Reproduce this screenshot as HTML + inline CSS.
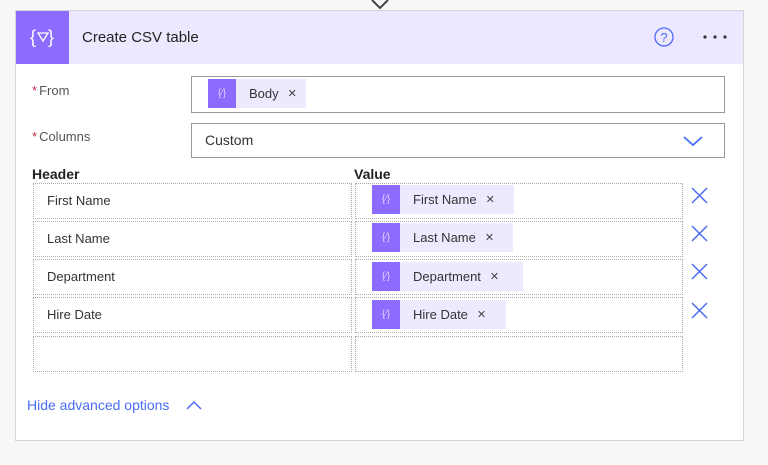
<!DOCTYPE html>
<html><head><meta charset="utf-8"><style>
*{box-sizing:border-box;margin:0;padding:0}
svg{display:block}
body{width:768px;height:465px;background:#f8f8f8;font-family:"Segoe UI","Liberation Sans",sans-serif;position:relative;overflow:hidden;color:#333}
.a{position:absolute}
.card{left:15px;top:10px;width:729px;height:431px;background:#fff;border:1px solid #d6d6d6}
.hdr{left:16px;top:11px;width:727px;height:53px;background:#ede8ff}
.ico{left:16px;top:11px;width:53px;height:53px;background:#8c6cff}
.title{left:82px;top:29px;font-size:15px;color:#222}
.lbl{font-size:13px;color:#555}
.lbl b{color:#c4314b;font-weight:normal;margin-right:2px}
.box{border:1px solid #9a9a9a;background:#fff}
.cell{border:1px dotted #aaa;font-size:13px;color:#333;padding-left:13px;line-height:34px}
.tok{height:29px;background:#efe9ff;font-size:13px;color:#333;display:flex;align-items:center}
.tok i{width:28px;height:29px;background:#8c6cff;display:flex;align-items:center;justify-content:center;margin-right:13px;font-style:normal;color:#d8ccff;font-size:10px}
.tok span.x{margin-left:9px;font-size:11px;color:#444}
</style></head><body>
<svg class="a" style="left:369px;top:0" width="22" height="10"><path d="M3 0 L11 8 L19 0" fill="none" stroke="#444" stroke-width="2"/></svg>
<div class="a card"></div>
<div class="a hdr"></div>
<div class="a ico"></div>
<svg class="a" style="left:28px;top:24px" width="30" height="28"><text x="2" y="19" font-size="18" fill="#fff" font-family="Liberation Sans">{</text><text x="20" y="19" font-size="18" fill="#fff" font-family="Liberation Sans">}</text><path d="M10 9 H20 L15 17 Z" fill="none" stroke="#fff" stroke-width="1.3"/></svg>
<div class="a title">Create CSV table</div>
<svg class="a" style="left:654px;top:27px" width="20" height="20"><circle cx="10" cy="10" r="9" fill="none" stroke="#4a6cf7" stroke-width="1.3"/><text x="10" y="15" text-anchor="middle" font-size="13" fill="#4a6cf7" font-family="Liberation Sans">?</text></svg>
<svg class="a" style="left:703px;top:35px" width="26" height="4"><circle cx="2" cy="2" r="1.6" fill="#333"/><circle cx="12" cy="2" r="1.6" fill="#333"/><circle cx="22" cy="2" r="1.6" fill="#333"/></svg>

<div class="a lbl" style="left:32px;top:83px"><b>*</b>From</div>
<div class="a box" style="left:191px;top:76px;width:534px;height:37px"></div>
<div class="a tok" style="left:208px;top:79px;width:98px"><i>{⁄}</i>Body<span class="x">✕</span></div>
<div class="a lbl" style="left:32px;top:129px"><b>*</b>Columns</div>
<div class="a box" style="left:191px;top:123px;width:534px;height:35px"></div>
<div class="a" style="left:205px;top:132px;font-size:14px;color:#333">Custom</div>
<svg class="a" style="left:682px;top:134px" width="22" height="14"><path d="M2 3 L11 11 L20 3" fill="none" stroke="#4a6cf7" stroke-width="1.8"/></svg>

<div class="a" style="left:32px;top:166px;font-size:14px;font-weight:bold;color:#222">Header</div>
<div class="a" style="left:354px;top:166px;font-size:14px;font-weight:bold;color:#222">Value</div>

<div class="a cell" style="left:33px;top:183px;width:319px;height:36px">First Name</div>
<div class="a cell" style="left:355px;top:183px;width:328px;height:36px"></div>
<div class="a tok" style="left:372px;top:185px;width:142px"><i>{⁄}</i>First Name<span class="x">✕</span></div>
<div class="a cell" style="left:33px;top:221px;width:319px;height:36px">Last Name</div>
<div class="a cell" style="left:355px;top:221px;width:328px;height:36px"></div>
<div class="a tok" style="left:372px;top:223px;width:141px"><i>{⁄}</i>Last Name<span class="x">✕</span></div>
<div class="a cell" style="left:33px;top:259px;width:319px;height:36px">Department</div>
<div class="a cell" style="left:355px;top:259px;width:328px;height:36px"></div>
<div class="a tok" style="left:372px;top:262px;width:151px"><i>{⁄}</i>Department<span class="x">✕</span></div>
<div class="a cell" style="left:33px;top:297px;width:319px;height:36px">Hire Date</div>
<div class="a cell" style="left:355px;top:297px;width:328px;height:36px"></div>
<div class="a tok" style="left:372px;top:300px;width:134px"><i>{⁄}</i>Hire Date<span class="x">✕</span></div>
<div class="a cell" style="left:33px;top:336px;width:319px;height:36px"></div>
<div class="a cell" style="left:355px;top:336px;width:328px;height:36px"></div>

<svg class="a" style="left:690px;top:186px" width="20" height="140"><g stroke="#4a6cf7" stroke-width="1.5" fill="none">
<path d="M2 2 L17 17 M17 2 L2 17"/><path d="M2 40 L17 55 M17 40 L2 55"/><path d="M2 78 L17 93 M17 78 L2 93"/><path d="M2 117 L17 132 M17 117 L2 132"/></g></svg>
<div class="a" style="left:27px;top:397px;font-size:14px;color:#4a6cf7">Hide advanced options</div>
<svg class="a" style="left:185px;top:399px" width="18" height="12"><path d="M2 10 L9 3 L16 10" fill="none" stroke="#4a6cf7" stroke-width="1.5"/></svg>
</body></html>
